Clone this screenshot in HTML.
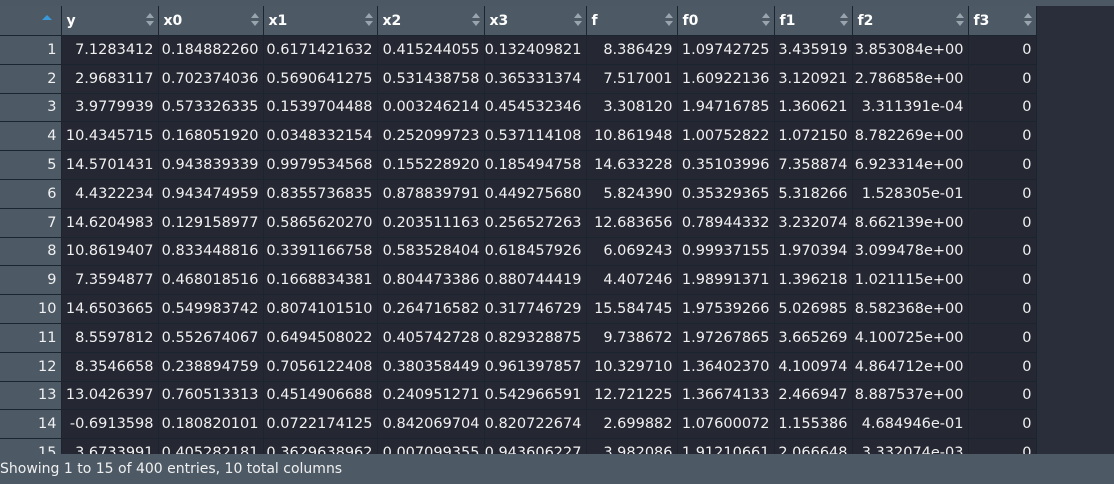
<!DOCTYPE html>
<html><head><style>
body{margin:0;width:1114px;height:484px;background:#2a2d3a;overflow:hidden;font-family:"DejaVu Sans","Liberation Sans",sans-serif;font-size:14px;color:#f0f0f0;position:relative}
.top{position:absolute;left:0;top:0;width:1114px;height:6px;background:#4c5864}
table{position:absolute;left:0;top:6px;border-collapse:collapse;table-layout:fixed}
th{background:#4d5a66;height:29px;text-align:left;padding:0 0 0 5px;font-weight:bold;font-size:14px;border-right:1px solid #1b2530;border-bottom:1px solid #1b2530;position:relative;color:#fff}
th .s{position:absolute;right:8px;top:7px;width:0;height:0;}
th .s:before{content:"";position:absolute;left:-4px;top:0;border-left:4px solid transparent;border-right:4px solid transparent;border-bottom:5px solid #9aa4ae}
th .s:after{content:"";position:absolute;left:-4px;top:8px;border-left:4px solid transparent;border-right:4px solid transparent;border-top:5px solid #9aa4ae}
th.r .a{position:absolute;right:9px;top:9px;border-left:5px solid transparent;border-right:5px solid transparent;border-bottom:5px solid #3a9ad9}
td{height:27.8px;padding:0 4px 0 0;text-align:right;background:#252733;border-right:1px solid #1b2530;border-bottom:1px solid #1b2530;white-space:nowrap;overflow:hidden;font-size:14.5px}
td.n{background:#4d5a66}
.foot{position:absolute;left:0;top:454px;width:1114px;height:30px;background:#4d5a66;color:#f0f0f0;font-size:14px;line-height:30px;padding-left:0}
</style></head><body>
<div class="top"></div>
<table>
<colgroup><col style="width:61px"><col style="width:97px"><col style="width:105px"><col style="width:114px"><col style="width:107px"><col style="width:102px"><col style="width:91px"><col style="width:97px"><col style="width:78px"><col style="width:116px"><col style="width:68px"></colgroup>
<tr><th class="r"><span class="a"></span></th><th>y<span class="s"></span></th><th>x0<span class="s"></span></th><th>x1<span class="s"></span></th><th>x2<span class="s"></span></th><th>x3<span class="s"></span></th><th>f<span class="s"></span></th><th>f0<span class="s"></span></th><th>f1<span class="s"></span></th><th>f2<span class="s"></span></th><th>f3<span class="s"></span></th></tr>
<tr><td class="n">1</td><td>7.1283412</td><td>0.184882260</td><td>0.6171421632</td><td>0.415244055</td><td>0.132409821</td><td>8.386429</td><td>1.09742725</td><td>3.435919</td><td>3.853084e+00</td><td>0</td></tr>
<tr><td class="n">2</td><td>2.9683117</td><td>0.702374036</td><td>0.5690641275</td><td>0.531438758</td><td>0.365331374</td><td>7.517001</td><td>1.60922136</td><td>3.120921</td><td>2.786858e+00</td><td>0</td></tr>
<tr><td class="n">3</td><td>3.9779939</td><td>0.573326335</td><td>0.1539704488</td><td>0.003246214</td><td>0.454532346</td><td>3.308120</td><td>1.94716785</td><td>1.360621</td><td>3.311391e-04</td><td>0</td></tr>
<tr><td class="n">4</td><td>10.4345715</td><td>0.168051920</td><td>0.0348332154</td><td>0.252099723</td><td>0.537114108</td><td>10.861948</td><td>1.00752822</td><td>1.072150</td><td>8.782269e+00</td><td>0</td></tr>
<tr><td class="n">5</td><td>14.5701431</td><td>0.943839339</td><td>0.9979534568</td><td>0.155228920</td><td>0.185494758</td><td>14.633228</td><td>0.35103996</td><td>7.358874</td><td>6.923314e+00</td><td>0</td></tr>
<tr><td class="n">6</td><td>4.4322234</td><td>0.943474959</td><td>0.8355736835</td><td>0.878839791</td><td>0.449275680</td><td>5.824390</td><td>0.35329365</td><td>5.318266</td><td>1.528305e-01</td><td>0</td></tr>
<tr><td class="n">7</td><td>14.6204983</td><td>0.129158977</td><td>0.5865620270</td><td>0.203511163</td><td>0.256527263</td><td>12.683656</td><td>0.78944332</td><td>3.232074</td><td>8.662139e+00</td><td>0</td></tr>
<tr><td class="n">8</td><td>10.8619407</td><td>0.833448816</td><td>0.3391166758</td><td>0.583528404</td><td>0.618457926</td><td>6.069243</td><td>0.99937155</td><td>1.970394</td><td>3.099478e+00</td><td>0</td></tr>
<tr><td class="n">9</td><td>7.3594877</td><td>0.468018516</td><td>0.1668834381</td><td>0.804473386</td><td>0.880744419</td><td>4.407246</td><td>1.98991371</td><td>1.396218</td><td>1.021115e+00</td><td>0</td></tr>
<tr><td class="n">10</td><td>14.6503665</td><td>0.549983742</td><td>0.8074101510</td><td>0.264716582</td><td>0.317746729</td><td>15.584745</td><td>1.97539266</td><td>5.026985</td><td>8.582368e+00</td><td>0</td></tr>
<tr><td class="n">11</td><td>8.5597812</td><td>0.552674067</td><td>0.6494508022</td><td>0.405742728</td><td>0.829328875</td><td>9.738672</td><td>1.97267865</td><td>3.665269</td><td>4.100725e+00</td><td>0</td></tr>
<tr><td class="n">12</td><td>8.3546658</td><td>0.238894759</td><td>0.7056122408</td><td>0.380358449</td><td>0.961397857</td><td>10.329710</td><td>1.36402370</td><td>4.100974</td><td>4.864712e+00</td><td>0</td></tr>
<tr><td class="n">13</td><td>13.0426397</td><td>0.760513313</td><td>0.4514906688</td><td>0.240951271</td><td>0.542966591</td><td>12.721225</td><td>1.36674133</td><td>2.466947</td><td>8.887537e+00</td><td>0</td></tr>
<tr><td class="n">14</td><td>-0.6913598</td><td>0.180820101</td><td>0.0722174125</td><td>0.842069704</td><td>0.820722674</td><td>2.699882</td><td>1.07600072</td><td>1.155386</td><td>4.684946e-01</td><td>0</td></tr>
<tr><td class="n">15</td><td>3.6733991</td><td>0.405282181</td><td>0.3629638962</td><td>0.007099355</td><td>0.943606227</td><td>3.982086</td><td>1.91210661</td><td>2.066648</td><td>3.332074e-03</td><td>0</td></tr>
</table>
<div class="foot">Showing 1 to 15 of 400 entries, 10 total columns</div>
</body></html>
